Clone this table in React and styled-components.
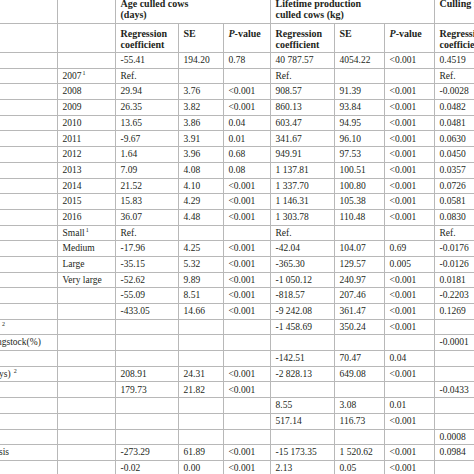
import React from 'react'
import styled, { createGlobalStyle } from 'styled-components'

const GlobalStyle = createGlobalStyle`
  html, body {
    margin: 0;
    padding: 0;
    background: #fff;
    overflow: hidden;
  }
`

const Page = styled.div`
  width: 474px;
  height: 474px;
  overflow: hidden;
  background: #fff;
`

const Table = styled.table`
  border-collapse: collapse;
  table-layout: fixed;
  width: 514px;
  margin-top: -5px;
  font-family: "Liberation Serif", "Times New Roman", serif;
  color: #231f20;
`

const Col = styled.col`
  width: ${props => props.$w}px;
`

const Head = styled.th`
  font-size: 10px;
  line-height: 11px;
  font-weight: bold;
  text-align: left;
  vertical-align: top;
  padding: ${props => (props.$top ? '2px 5px 3px' : '4px 5px 2px')};
  border: 1px solid #b8b8b8;
  white-space: nowrap;
  overflow: hidden;
  &:first-child {
    border-left: none;
  }
`

const Cell = styled.td`
  font-size: 9.5px;
  line-height: 10.5px;
  height: 14.7px;
  padding: 0 5px;
  border: 1px solid #b8b8b8;
  white-space: nowrap;
  overflow: hidden;
  vertical-align: middle;
  &:first-child {
    border-left: none;
    padding-left: 0;
  }
`

const Label = styled.span`
  display: inline-block;
  margin-left: ${props => props.$shift || 0}px;
`

const Sup = styled.sup`
  font-size: 6px;
  line-height: 0;
  vertical-align: 4px;
  margin-left: ${props => (props.$gap ? 3 : 1)}px;
`

const Ital = styled.i`
  font-style: italic;
`

const PValue = () => (
  <>
    <Ital>P</Ital>-value
  </>
)

const Reg = () => (
  <>
    Regression
    <br />
    coefficient
  </>
)

const rows = [
  ['', '', '-55.41', '194.20', '0.78', '40 787.57', '4054.22', '<0.001', '0.4519'],
  ['', <>2007<Sup>1</Sup></>, 'Ref.', '', '', 'Ref.', '', '', 'Ref.'],
  ['', '2008', '29.94', '3.76', '<0.001', '908.57', '91.39', '<0.001', '-0.0028'],
  ['', '2009', '26.35', '3.82', '<0.001', '860.13', '93.84', '<0.001', '0.0482'],
  ['', '2010', '13.65', '3.86', '0.04', '603.47', '94.95', '<0.001', '0.0481'],
  ['', '2011', '-9.67', '3.91', '0.01', '341.67', '96.10', '<0.001', '0.0630'],
  ['', '2012', '1.64', '3.96', '0.68', '949.91', '97.53', '<0.001', '0.0450'],
  ['', '2013', '7.09', '4.08', '0.08', '1 137.81', '100.51', '<0.001', '0.0357'],
  ['', '2014', '21.52', '4.10', '<0.001', '1 337.70', '100.80', '<0.001', '0.0726'],
  ['', '2015', '15.83', '4.29', '<0.001', '1 146.31', '105.38', '<0.001', '0.0581'],
  ['', '2016', '36.07', '4.48', '<0.001', '1 303.78', '110.48', '<0.001', '0.0830'],
  ['', <>Small<Sup>1</Sup></>, 'Ref.', '', '', 'Ref.', '', '', 'Ref.'],
  ['', 'Medium', '-17.96', '4.25', '<0.001', '-42.04', '104.07', '0.69', '-0.0176'],
  ['', 'Large', '-35.15', '5.32', '<0.001', '-365.30', '129.57', '0.005', '-0.0126'],
  ['', 'Very large', '-52.62', '9.89', '<0.001', '-1 050.12', '240.97', '<0.001', '0.0181'],
  ['', '', '-55.09', '8.51', '<0.001', '-818.57', '207.46', '<0.001', '-0.2203'],
  ['', '', '-433.05', '14.66', '<0.001', '-9 242.08', '361.47', '<0.001', '0.1269'],
  [<Label $shift={1}><Sup>2</Sup></Label>, '', '', '', '', '-1 458.69', '350.24', '<0.001', ''],
  [<Label $shift={-3}>ngstock(%)</Label>, '', '', '', '', '', '', '', '-0.0001'],
  ['', '', '', '', '', '-142.51', '70.47', '0.04', ''],
  [<Label $shift={-1}>ys)<Sup $gap>2</Sup></Label>, '', '208.91', '24.31', '<0.001', '-2 828.13', '649.08', '<0.001', ''],
  ['', '', '179.73', '21.82', '<0.001', '', '', '', '-0.0433'],
  ['', '', '', '', '', '8.55', '3.08', '0.01', ''],
  ['', '', '', '', '', '517.14', '116.73', '<0.001', ''],
  ['', '', '', '', '', '', '', '', '0.0008'],
  [<Label $shift={-1}>sis</Label>, '', '-273.29', '61.89', '<0.001', '-15 173.35', '1 520.62', '<0.001', '0.0984'],
  ['', '', '-0.02', '0.00', '<0.001', '2.13', '0.05', '<0.001', ''],
]

const widths = [57, 58, 63, 45, 47, 64, 50, 50, 80]

const App = () => (
  <Page>
    <GlobalStyle />
    <Table>
      <colgroup>
        {widths.map((w, key) => (
          <Col key={key} $w={w} />
        ))}
      </colgroup>
      <thead>
        <tr>
          <Head $top />
          <Head $top />
          <Head $top colSpan={3}>
            Age culled cows
            <br />
            (days)
          </Head>
          <Head $top colSpan={3}>
            Lifetime production
            <br />
            culled cows (kg)
          </Head>
          <Head $top>Culling rate</Head>
        </tr>
        <tr>
          <Head />
          <Head />
          <Head><Reg /></Head>
          <Head>SE</Head>
          <Head><PValue /></Head>
          <Head><Reg /></Head>
          <Head>SE</Head>
          <Head><PValue /></Head>
          <Head><Reg /></Head>
        </tr>
      </thead>
      <tbody>
        {rows.map((row, r) => (
          <tr key={r}>
            {row.map((value, c) => (
              <Cell key={c}>{value}</Cell>
            ))}
          </tr>
        ))}
      </tbody>
    </Table>
  </Page>
)

export default App
